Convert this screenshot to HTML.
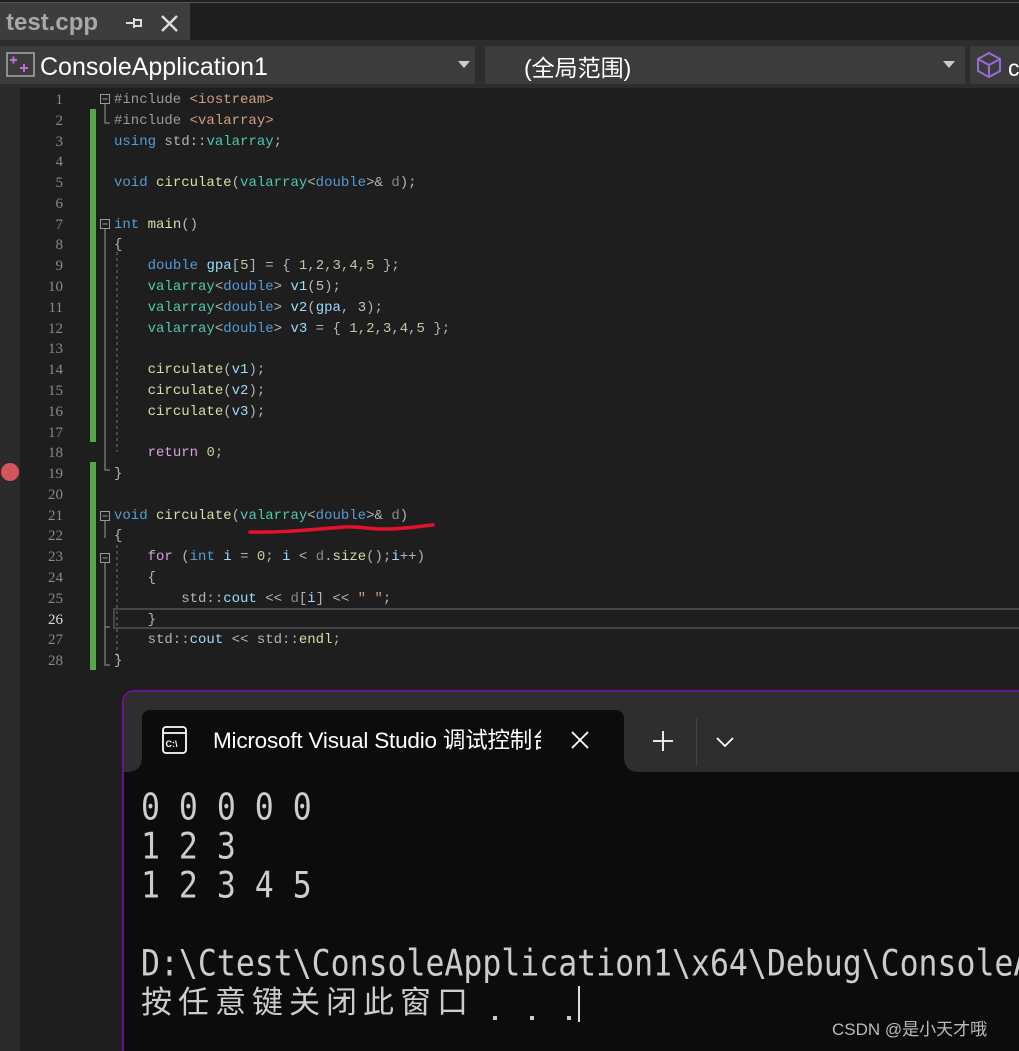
<!DOCTYPE html>
<html><head><meta charset="utf-8"><style>
*{margin:0;padding:0;box-sizing:border-box}
html,body{width:1019px;height:1051px;overflow:hidden}
body{background:#1e1e1e;position:relative;font-family:"Liberation Sans","Noto Sans CJK SC",sans-serif}
.abs{position:absolute}
.code{position:absolute;left:114px;top:90px;font-family:"Liberation Mono","Noto Sans CJK SC",monospace;font-size:14px;line-height:20.78px;color:#b4b4b4;white-space:pre}
.ln{position:absolute;left:20px;width:43px;top:90px;font-family:"Liberation Serif",serif;font-size:15px;line-height:20.78px;color:#8a8a8a;text-align:right;white-space:pre}
.k{color:#569cd6}.t{color:#4ec9b0}.f{color:#dcdcaa}.v{color:#9cdcfe}.s{color:#d69d85}.p{color:#9b9b9b}.n{color:#b5cea8}.r{color:#d8a0df}.pa{color:#8a8a8a}
.con{font-family:"DejaVu Sans Mono","Noto Sans CJK SC",monospace;font-size:31.5px;color:#cccccc;white-space:pre;position:absolute;left:17px;line-height:39px;transform-origin:left center}
</style></head><body>
<div class="abs" style="left:0;top:0;width:1019px;height:40px;background:#1f1f1f"></div>
<div class="abs" style="left:0;top:2px;width:1019px;height:1px;background:#555"></div>
<div class="abs" style="left:0;top:3px;width:190px;height:37px;background:#3d3d3d"></div>
<div class="abs" style="left:6px;top:6px;font-size:24px;font-weight:bold;color:#a8a8a8;line-height:34px">test.cpp</div>
<svg class="abs" style="left:125px;top:15px" width="18" height="16"><path d="M1 8h8M9 3v10M9 5h7v6H9" fill="none" stroke="#ddd" stroke-width="2"/></svg>
<svg class="abs" style="left:160px;top:14px" width="19" height="19"><path d="M2 2L17 17M17 2L2 17" stroke="#ddd" stroke-width="2.4"/></svg>
<div class="abs" style="left:0;top:40px;width:1019px;height:48px;background:#2d2d2d"></div>
<div class="abs" style="left:0;top:46px;width:475px;height:38px;background:#3c3c3c"></div>
<div class="abs" style="left:485px;top:46px;width:480px;height:38px;background:#3c3c3c"></div>
<div class="abs" style="left:970px;top:46px;width:49px;height:38px;background:#3c3c3c"></div>
<svg class="abs" style="left:6px;top:52px" width="29" height="25"><rect x="1" y="1" width="27" height="23" fill="none" stroke="#aaa" stroke-width="1.5"/><path d="M4 8h7M7.5 4.5v7M14 16h8M18 12v8" stroke="#c06bd8" stroke-width="2"/></svg>
<div class="abs" style="left:40px;top:50px;font-size:25px;color:#fff;line-height:34px">ConsoleApplication1</div>
<svg class="abs" style="left:458px;top:61px" width="12" height="8"><path d="M0 0h12L6 7z" fill="#ccc"/></svg>
<div class="abs" style="left:524px;top:51px;font-size:23px;color:#fff;line-height:34px">(全局范围)</div>
<svg class="abs" style="left:943px;top:61px" width="12" height="8"><path d="M0 0h12L6 7z" fill="#ccc"/></svg>
<svg class="abs" style="left:976px;top:51px" width="26" height="28"><path d="M13 2L24 8v12L13 26 2 20V8zM2 8l11 6 11-6M13 14v12" fill="none" stroke="#9a6ad8" stroke-width="2"/></svg>
<div class="abs" style="left:1008px;top:51px;font-size:23px;color:#fff;line-height:34px">c</div>
<div class="abs" style="left:0;top:88px;width:20px;height:963px;background:#2b2b2b"></div>
<div class="abs" style="left:90px;top:109px;width:6px;height:333px;background:#57a64a"></div>
<div class="abs" style="left:90px;top:462px;width:6px;height:208px;background:#57a64a"></div>
<div class="abs" style="left:1px;top:463px;width:18px;height:18px;border-radius:50%;background:#d6545c"></div>
<div class="abs" style="left:113px;top:608px;width:906px;height:21px;border:2px solid #464646;border-right:none"></div>
<svg class="abs" style="left:95px;top:90px" width="30" height="580">
<g fill="none" stroke="#999" stroke-width="1">
<rect x="5.5" y="4.5" width="9" height="9"/><path d="M7.5 9h5"/>
<path d="M10 14v19h5"/>
<rect x="5.5" y="129.5" width="9" height="9"/><path d="M7.5 134h5"/>
<path d="M10 139v241h5"/>
<rect x="5.5" y="421.5" width="9" height="9"/><path d="M7.5 426h5"/>
<path d="M10 431v17"/>
<rect x="5.5" y="463.5" width="9" height="9"/><path d="M7.5 468h5"/>
<path d="M10 473v64h5M10 537v38h5"/>
</g>
<g stroke="#777" stroke-dasharray="3 3"><path d="M22 162v200M22 455v115M55 503v35"/></g>
</svg>
<div class="ln">1
2
3
4
5
6
7
8
9
10
11
12
13
14
15
16
17
18
19
20
21
22
23
24
25
<span style="color:#ddd">26</span>
27
28</div>
<div class="code"><span class="p">#include</span> <span class="s">&lt;iostream&gt;</span>
<span class="p">#include</span> <span class="s">&lt;valarray&gt;</span>
<span class="k">using</span> std::<span class="t">valarray</span>;

<span class="k">void</span> <span class="f">circulate</span>(<span class="t">valarray</span>&lt;<span class="k">double</span>&gt;&amp; <span class="pa">d</span>);

<span class="k">int</span> <span class="f">main</span>()
{
    <span class="k">double</span> <span class="v">gpa</span>[<span class="n">5</span>] = { <span class="n">1</span>,<span class="n">2</span>,<span class="n">3</span>,<span class="n">4</span>,<span class="n">5</span> };
    <span class="t">valarray</span>&lt;<span class="k">double</span>&gt; <span class="v">v1</span>(<span class="n">5</span>);
    <span class="t">valarray</span>&lt;<span class="k">double</span>&gt; <span class="v">v2</span>(<span class="v">gpa</span>, <span class="n">3</span>);
    <span class="t">valarray</span>&lt;<span class="k">double</span>&gt; <span class="v">v3</span> = { <span class="n">1</span>,<span class="n">2</span>,<span class="n">3</span>,<span class="n">4</span>,<span class="n">5</span> };

    <span class="f">circulate</span>(<span class="v">v1</span>);
    <span class="f">circulate</span>(<span class="v">v2</span>);
    <span class="f">circulate</span>(<span class="v">v3</span>);

    <span class="r">return</span> <span class="n">0</span>;
}

<span class="k">void</span> <span class="f">circulate</span>(<span class="t">valarray</span>&lt;<span class="k">double</span>&gt;&amp; <span class="pa">d</span>)
{
    <span class="r">for</span> (<span class="k">int</span> <span class="v">i</span> = <span class="n">0</span>; <span class="v">i</span> &lt; <span class="pa">d</span>.<span class="f">size</span>();<span class="v">i</span>++)
    {
        std::<span class="v">cout</span> &lt;&lt; <span class="pa">d</span>[<span class="v">i</span>] &lt;&lt; <span class="s">" "</span>;
    }
    std::<span class="v">cout</span> &lt;&lt; std::<span class="f">endl</span>;
}</div>
<svg class="abs" style="left:245px;top:517px" width="195" height="20"><path d="M5 15C40 16 70 12 100 10 C115 9 120 12 140 12 C160 12 175 9 188 8" fill="none" stroke="#e8112d" stroke-width="3.5" stroke-linecap="round"/></svg>
<div class="abs" style="left:122px;top:690px;width:897px;height:361px;border:2px solid #6b1487;border-right:none;border-bottom:none;border-radius:12px 0 0 0;background:#0c0c0c;overflow:hidden">
  <div class="abs" style="left:0;top:0;width:897px;height:80px;background:#2e2e2e;border-radius:10px 0 0 0"></div>
  <div class="abs" style="left:18px;top:18px;width:482px;height:70px;background:#0c0c0c;border-radius:8px 8px 0 0"></div>
  <div class="abs" style="left:500px;top:68px;width:12px;height:12px;background:radial-gradient(circle at 100% 0,#2e2e2e 11px,#0c0c0c 12px)"></div>
  <div class="abs" style="left:6px;top:68px;width:12px;height:12px;background:radial-gradient(circle at 0 0,#2e2e2e 11px,#0c0c0c 12px)"></div>
  <svg class="abs" style="left:38px;top:34px" width="26" height="28"><rect x="1" y="1" width="23" height="26" rx="3" fill="none" stroke="#fff" stroke-width="1.8"/><path d="M1 7h23" stroke="#fff" stroke-width="1.8"/><text x="3.5" y="21" font-family="Liberation Sans" font-size="9" font-weight="bold" fill="#fff">C:\</text></svg>
  <div class="abs" style="left:89px;top:34px;font-size:22.5px;color:#fff;line-height:30px;white-space:nowrap;width:328px;overflow:hidden;letter-spacing:-0.2px">Microsoft Visual Studio 调试控制台</div>
  <svg class="abs" style="left:446px;top:38px" width="20" height="20"><path d="M2 2L18 18M18 2L2 18" stroke="#fff" stroke-width="1.8"/></svg>
  <svg class="abs" style="left:528px;top:38px" width="22" height="22"><path d="M11 1v20M1 11h20" stroke="#fff" stroke-width="1.8"/></svg>
  <div class="abs" style="left:572px;top:26px;width:1px;height:48px;background:#444"></div>
  <svg class="abs" style="left:592px;top:44px" width="18" height="12"><path d="M1 2l8 8 8-8" fill="none" stroke="#fff" stroke-width="1.8"/></svg>
  <div class="con" style="top:97px;transform:scaleY(1.15)">0 0 0 0 0</div>
  <div class="con" style="top:136px;transform:scaleY(1.15)">1 2 3</div>
  <div class="con" style="top:175px;transform:scaleY(1.15)">1 2 3 4 5</div>
  <div class="con" style="top:253px;transform:scaleY(1.15)">D:\Ctest\ConsoleApplication1\x64\Debug\ConsoleApplication1.exe</div>
  <div class="con" style="top:292px;font-size:31px;letter-spacing:6px;transform:scaleY(1.0)">按任意键关闭此窗口</div>
  <div class="abs" style="left:369px;top:324px;width:4px;height:4px;background:#ccc"></div>
  <div class="abs" style="left:406px;top:324px;width:4px;height:4px;background:#ccc"></div>
  <div class="abs" style="left:443px;top:324px;width:4px;height:4px;background:#ccc"></div>
  <div class="abs" style="left:454px;top:294px;width:2px;height:36px;background:#ddd"></div>
  <div class="abs" style="left:708px;top:327px;font-size:17px;color:#bbb;line-height:22px">CSDN @是小天才哦</div>
</div>
</body></html>
